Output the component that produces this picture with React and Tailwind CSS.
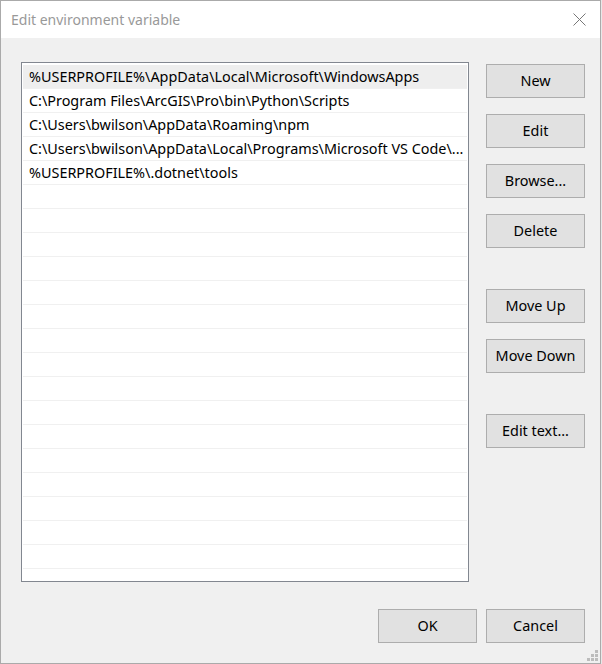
import React from 'react';

const paths = [
  '%USERPROFILE%\\AppData\\Local\\Microsoft\\WindowsApps',
  'C:\\Program Files\\ArcGIS\\Pro\\bin\\Python\\Scripts',
  'C:\\Users\\bwilson\\AppData\\Roaming\\npm',
  'C:\\Users\\bwilson\\AppData\\Local\\Programs\\Microsoft VS Code\\...',
  '%USERPROFILE%\\.dotnet\\tools',
];

// empty rows keep the listbox ruled all the way down
const rows = [...paths, ...Array(17).fill('')];

function Btn({ children, className = '' }) {
  return (
    <button
      className={`w-[99px] h-[34px] bg-[#e1e1e1] border border-[#adadad] text-[14.4px] text-black leading-none ${className}`}
    >
      {children}
    </button>
  );
}

export default function App() {
  return (
    <div className="w-[602px] h-[664px] bg-[#e8e8e8] font-['Noto_Sans','Liberation_Sans',sans-serif]">
      <div className="w-[601px] h-[664px] border border-[#aaaaaa] bg-[#f0f0f0] flex flex-col relative">
        {/* Title bar */}
        <div className="h-[37px] bg-white flex items-center justify-between pl-[10px] pr-[14px] shrink-0">
          <span className="text-[14px] text-[#999999] leading-none">Edit environment variable</span>
          <svg width="13" height="13" viewBox="0 0 13 13">
            <path d="M0.5 0.5 L12.5 12.5 M12.5 0.5 L0.5 12.5" stroke="#777" strokeWidth="1" />
          </svg>
        </div>

        {/* Body */}
        <div className="flex pl-[20px] pt-[24px]">
          <div className="w-[448px] h-[520px] border border-[#828790] bg-white px-px pt-[2px] overflow-hidden">
            {rows.map((p, i) => (
              <div
                key={i}
                className={`h-[24px] border-b border-[#f0f0f0] pl-[6px] flex items-center text-[14.4px] text-black whitespace-nowrap ${
                  i === 0 ? 'bg-[#eeeeee]' : ''
                }`}
              >
                {p}
              </div>
            ))}
          </div>

          <div className="ml-[17px] mt-[2px] flex flex-col">
            <Btn>New</Btn>
            <Btn className="mt-[16px]">Edit</Btn>
            <Btn className="mt-[16px]">Browse...</Btn>
            <Btn className="mt-[16px]">Delete</Btn>
            <Btn className="mt-[41px]">Move Up</Btn>
            <Btn className="mt-[16px]">Move Down</Btn>
            <Btn className="mt-[41px]">Edit text...</Btn>
          </div>
        </div>

        {/* Footer buttons */}
        <div className="flex justify-end gap-[9px] pr-[15px] mt-[27px]">
          <Btn>OK</Btn>
          <Btn>Cancel</Btn>
        </div>

        {/* Resize grip */}
        <svg width="12" height="12" viewBox="0 0 12 12" className="absolute right-px bottom-px">
          <rect x="8" y="0" width="3" height="3" fill="#bcbcbc" />
          <rect x="4" y="4" width="3" height="3" fill="#bcbcbc" />
          <rect x="8" y="4" width="3" height="3" fill="#bcbcbc" />
          <rect x="0" y="8" width="3" height="3" fill="#bcbcbc" />
          <rect x="4" y="8" width="3" height="3" fill="#bcbcbc" />
          <rect x="8" y="8" width="3" height="3" fill="#bcbcbc" />
        </svg>
      </div>
    </div>
  );
}
